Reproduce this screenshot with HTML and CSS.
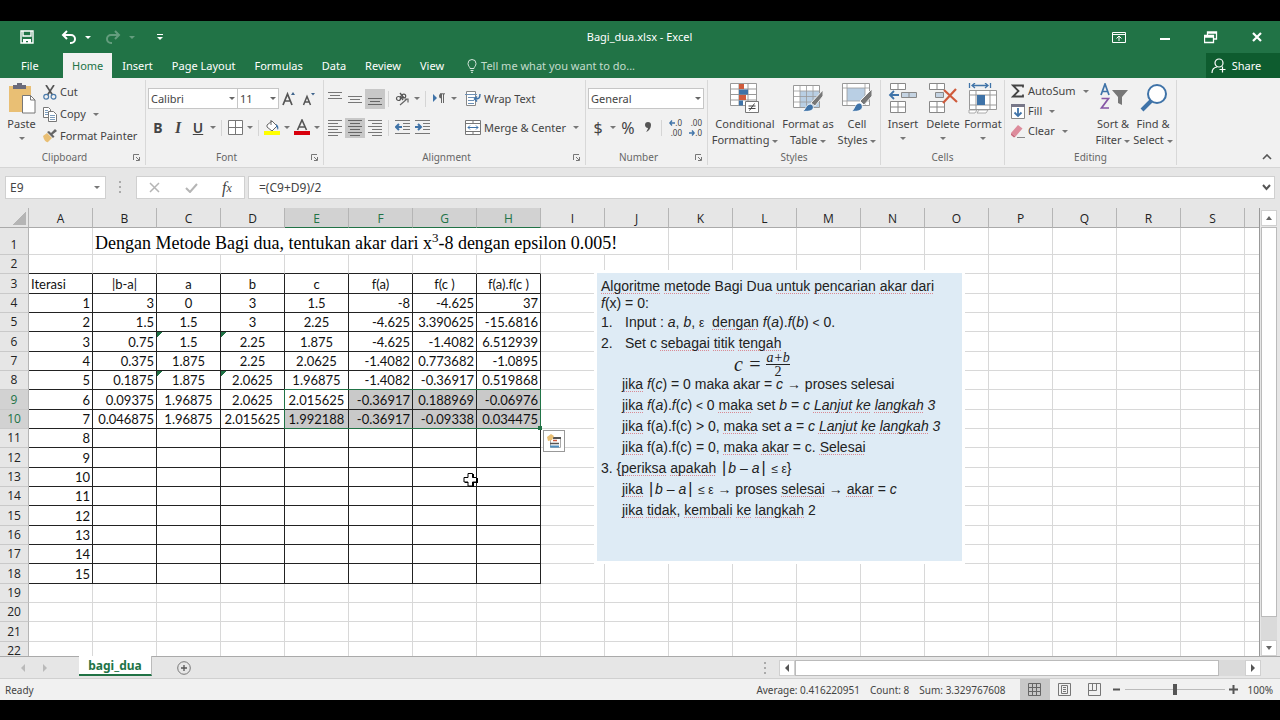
FILE: index.html
```html
<!DOCTYPE html>
<html lang="en">
<head>
    <meta charset="UTF-8">
    <title>Bagi_dua.xlsx - Excel</title>
    <link rel="stylesheet" href="styles.css">
</head>
<body>

<!-- title bar -->
<header class="titlebar">
    <div class="quick">
        <button class="q-save" aria-label="Save"><svg width="14" height="14" viewBox="0 0 14 14"><path d="M1 1h12v12H1z M3 1v5h8V1" fill="none" stroke="#fff" stroke-width="1.4"/><path d="M3 9h8v4H8v-2H6v2H3z" fill="#fff"/></svg></button>
        <button class="q-undo" aria-label="Undo"><svg width="16" height="14" viewBox="0 0 16 14"><path d="M2 5h8a4 4 0 0 1 0 8H9M6 1L2 5l4 4" fill="none" stroke="#fff" stroke-width="2"/></svg><i class="caret"></i></button>
        <button class="q-redo" aria-label="Redo"><svg width="16" height="14" viewBox="0 0 16 14"><path d="M14 5H6a4 4 0 0 0 0 8h1M10 1l4 4-4 4" fill="none" stroke="#fff" stroke-width="2"/></svg><i class="caret"></i></button>
        <button class="q-more" aria-label="Customize"><svg width="6" height="7" viewBox="0 0 6 7"><path d="M0 .5h6" stroke="#fff"/><path d="M0 3h6L3 6z" fill="#fff"/></svg></button>
    </div>
    <h1>Bagi_dua.xlsx - Excel</h1>
    <div class="win">
        <button aria-label="Ribbon display"><svg width="14" height="11" viewBox="0 0 14 11"><path d="M.5.5h13v10H.5zM.5 2.5h13M7 9V4.500M4.500 6.500L7 4l2.500 2.500" fill="none" stroke="#fff"/></svg></button>
        <button aria-label="Minimize"><svg width="12" height="12" viewBox="0 0 12 12"><path d="M1 8h10" stroke="#fff" stroke-width="2"/></svg></button>
        <button aria-label="Restore"><svg width="14" height="13" viewBox="0 0 14 13"><path d="M.5 4.500h9v7h-9zM.5 6h9M3.500 4V1h9v7H10M3.500 2h9" fill="none" stroke="#fff" stroke-width="1.300"/></svg></button>
        <button aria-label="Close"><svg width="10" height="10" viewBox="0 0 10 10"><path d="M1 1l8 8M9 1L1 9" stroke="#fff" stroke-width="2.200"/></svg></button>
    </div>
</header>

<nav class="tabs">
    <a href="#" class="file">File</a>
    <a href="#" class="current">Home</a>
    <a href="#">Insert</a>
    <a href="#">Page Layout</a>
    <a href="#">Formulas</a>
    <a href="#">Data</a>
    <a href="#">Review</a>
    <a href="#">View</a>
    <a href="#" class="tell"><svg width="10" height="14" viewBox="0 0 10 14"><path d="M3 9.500C3 8 1 7 1 4.500a4 4 0 0 1 8 0C9 7 7 8 7 9.500zM3.500 11.500h3M4 13.300h2" fill="none" stroke="#d5e6dc"/></svg>Tell me what you want to do...</a>
    <button class="share"><svg width="15" height="16" viewBox="0 0 15 16"><circle cx="8" cy="5" r="4" fill="none" stroke="#fff" stroke-width="1.200"/><path d="M1 15c0-3.500 2-5.500 5-6M11.500 8.500v6M8.500 11.500h6" fill="none" stroke="#fff" stroke-width="1.200"/></svg>Share</button>
</nav>

<!-- ribbon -->
<section class="ribbon">
    <div class="group g-clip">
        <div class="body">
            <button class="big paste">
                <svg width="28" height="31" viewBox="0 0 28 31"><path d="M1 3h22v26H1z" fill="#e9bf74"/><path d="M5 2h4V0h5v2h4v4H5z" fill="#6b6b7b"/><path d="M14.500 12.500h8l4.500 4.500v13H14.500z" fill="#fff" stroke="#777"/><path d="M22.500 12.500V17H27" fill="none" stroke="#777"/></svg>
                <span>Paste</span><i class="caret"></i>
            </button>
            <div class="stack">
                <button><svg width="14" height="15" viewBox="0 0 14 15"><path d="M3 0l6.500 10M11 0L4.500 10" stroke="#555" stroke-width="1.700"/><circle cx="3.200" cy="11.700" r="2.400" fill="none" stroke="#4b7bab" stroke-width="1.200"/><circle cx="10.500" cy="11.700" r="2.400" fill="none" stroke="#4b7bab" stroke-width="1.200"/></svg>Cut</button>
                <button><svg width="14" height="15" viewBox="0 0 14 15"><path d="M.5.5h5l2 2v8h-7z" fill="#fff" stroke="#777"/><path d="M2 3.500h3M2 5.500h4M2 7.500h4" stroke="#7c9dbd"/><path d="M5.500 4.500h5l3 3v7h-8z" fill="#fff" stroke="#777"/><path d="M7 8.500h5M7 10.500h5M7 12.500h5" stroke="#7c9dbd"/></svg>Copy <i class="caret"></i></button>
                <button><svg width="14" height="14" viewBox="0 0 14 14"><path d="M0 7l4-3 5 5-4 4c-1 1-4-1-5-6z" fill="#e9bf74"/><path d="M4 3l6 6 1.500-1.500L9.500 5.500 14 2l-2-2-4 4-2-2z" fill="#666"/></svg>Format Painter</button>
            </div>
        </div>
        <footer>Clipboard<svg class="launch" width="7" height="7" viewBox="0 0 7 7"><path d="M.5 6V.5H6M3 3l3 3M6.500 3v3.500H3" fill="none" stroke="#777"/></svg></footer>
    </div>

    <div class="group g-font">
        <div class="rows">
            <div class="line">
                <span class="combo c-font"><select aria-label="Font"><option>Calibri</option></select></span>
                <span class="combo c-size"><select aria-label="Font size"><option>11</option></select></span>
                <button class="w20" aria-label="Increase font size"><svg width="14" height="16" viewBox="0 0 14 16"><path d="M1 14L5.500 3 10 14M2.700 10h5.600" fill="none" stroke="#555" stroke-width="1.700"/><path d="M9 4l2-3 2 3z" fill="#3f648c"/></svg></button>
                <button class="w20" aria-label="Decrease font size"><svg width="14" height="16" viewBox="0 0 14 16"><path d="M1.500 14L5 5.500 8.500 14M2.700 11h4.600" fill="none" stroke="#555" stroke-width="1.500"/><path d="M9 2l2 2.500L13 2z" fill="#3f648c"/></svg></button>
            </div>
            <div class="line">
                <button class="w20 bold">B</button>
                <button class="w20 ital">I</button>
                <button class="w20 undl">U</button>
                <i class="caret"></i>
                <i class="sep"></i>
                <button class="w20" aria-label="Borders"><svg width="15" height="15" viewBox="0 0 15 15"><path d="M.5.5h14v14H.5zM7.500 1v13M1 7.500h13" fill="#fff" stroke="#777"/></svg></button>
                <i class="caret"></i>
                <i class="sep"></i>
                <button class="w20" aria-label="Fill color"><svg width="16" height="17" viewBox="0 0 16 17"><path d="M3 6l5-4 5 5-5 5-5-4z" fill="#fff" stroke="#666"/><path d="M7 1v5" stroke="#666"/><path d="M12 5c2 1 3 3 2 6-1-1-1-3-2-4z" fill="#3f73a8"/><path d="M0 12h16v4H0z" fill="#ff0"/></svg></button>
                <i class="caret"></i>
                <button class="w20" aria-label="Font color"><svg width="16" height="17" viewBox="0 0 16 17"><path d="M3.500 11L8 1l4.500 10M5 8h6" fill="none" stroke="#555" stroke-width="1.600"/><path d="M0 12h16v4H0z" fill="#d8000c"/></svg></button>
                <i class="caret"></i>
            </div>
        </div>
        <footer>Font<svg class="launch" width="7" height="7" viewBox="0 0 7 7"><path d="M.5 6V.5H6M3 3l3 3M6.500 3v3.500H3" fill="none" stroke="#777"/></svg></footer>
    </div>

    <div class="group g-align">
        <div class="body">
            <div class="rows">
                <div class="line">
                    <button class="w20" aria-label="Top align"><svg width="14" height="14" viewBox="0 0 14 14"><path d="M0 .5h14M2 3.500h10M0 6.500h14" stroke="#777"/></svg></button>
                    <button class="w20" aria-label="Middle align"><svg width="14" height="14" viewBox="0 0 14 14"><path d="M0 4.500h14M2 7.500h10M0 10.500h14" stroke="#777"/></svg></button>
                    <button class="w20 on" aria-label="Bottom align"><svg width="14" height="14" viewBox="0 0 14 14"><path d="M0 6.500h14M2 9.500h10M0 12.500h14" stroke="#666"/></svg></button>
                    <i class="sep"></i>
                    <button class="w20" aria-label="Orientation"><svg width="15" height="14" viewBox="0 0 15 14"><circle cx="3.500" cy="6.500" r="2" fill="none" stroke="#555" stroke-width="1.200"/><path d="M5 4l3 4M5 1l4 5" stroke="#555" stroke-width="1.300"/><circle cx="8.800" cy="4" r="1.900" fill="none" stroke="#555" stroke-width="1.200"/><path d="M5 13l7-6M9.500 7H13v3.500" fill="none" stroke="#666" stroke-width="1.200"/></svg></button>
                    <i class="caret"></i>
                    <i class="sep"></i>
                    <button class="w20" aria-label="Text direction"><svg width="14" height="12" viewBox="0 0 14 12"><path d="M1 1l4 4-4 4z" fill="#3f73a8"/><path d="M9.500 1v9M11.500 1v9M8 .8h5" stroke="#666"/><path d="M9.500.5v5a2.500 2.500 0 0 1 0-5z" fill="#666"/></svg></button>
                    <i class="caret"></i>
                </div>
                <div class="line">
                    <button class="w20" aria-label="Align left"><svg width="14" height="16" viewBox="0 0 14 16"><path d="M0 .5h14M0 3.500h10M0 6.500h14M0 9.500h10M0 12.500h14M0 15.500h10" stroke="#777"/></svg></button>
                    <button class="w20 on" aria-label="Center"><svg width="14" height="16" viewBox="0 0 14 16"><path d="M0 .5h14M2 3.500h10M0 6.500h14M2 9.500h10M0 12.500h14M2 15.500h10" stroke="#666"/></svg></button>
                    <button class="w20" aria-label="Align right"><svg width="14" height="16" viewBox="0 0 14 16"><path d="M0 .5h14M4 3.500h10M0 6.500h14M4 9.500h10M0 12.500h14M4 15.500h10" stroke="#777"/></svg></button>
                    <i class="sep"></i>
                    <button class="w20" aria-label="Decrease indent"><svg width="15" height="15" viewBox="0 0 15 15"><path d="M0 .5h15M8 3.500h7M8 6.500h7M8 9.500h7M0 13.500h15" stroke="#777"/><path d="M7 7H2M4 4L1 7l3 3" fill="none" stroke="#3f73a8" stroke-width="2"/></svg></button>
                    <button class="w20" aria-label="Increase indent"><svg width="15" height="15" viewBox="0 0 15 15"><path d="M0 .5h15M8 3.500h7M8 6.500h7M8 9.500h7M0 13.500h15" stroke="#777"/><path d="M0 7h5M3 4l3 3-3 3" fill="none" stroke="#3f73a8" stroke-width="2"/></svg></button>
                </div>
            </div>
            <div class="wrapcol">
                <button><svg width="16" height="15" viewBox="0 0 16 15"><path d="M1.500.5h9v14h-9z" fill="#fff" stroke="#888"/><path d="M0 3.500h12M3 6.500h7M3 9.500h6M3 12.500h6" stroke="#6d90b5"/><path d="M15 3c0 4-1 5-5 5M12 5.500L9.500 8l2.500 2.500" fill="none" stroke="#3f73a8" stroke-width="1.500"/></svg>Wrap Text</button>
                <button><svg width="16" height="15" viewBox="0 0 16 15"><path d="M.5.5h15v14H.5zM.5 3.500h15M.5 11.500h15M8 0v3M8 12v3" fill="#fff" stroke="#777"/><path d="M3 7.500h10M5 5.500l-2 2 2 2M11 5.500l2 2-2 2" fill="none" stroke="#3f73a8"/></svg>Merge &amp; Center <i class="caret"></i></button>
            </div>
        </div>
        <footer>Alignment<svg class="launch" width="7" height="7" viewBox="0 0 7 7"><path d="M.5 6V.5H6M3 3l3 3M6.500 3v3.500H3" fill="none" stroke="#777"/></svg></footer>
    </div>

    <div class="group g-num">
        <div class="rows">
            <div class="line"><span class="combo c-num"><select aria-label="Number format"><option>General</option></select></span></div>
            <div class="line">
                <button class="w20 sym">$</button>
                <i class="caret"></i>
                <button class="w20 sym">%</button>
                <button class="w20 comma" aria-label="Comma style"><svg width="6" height="10" viewBox="0 0 6 10"><path d="M0 3a3 3 0 1 1 6 0c0 3-2 6-5 7 1-1.500 2-3 2-4-2 0-3-1.500-3-3z" fill="#555"/></svg></button>
                <i class="sep"></i>
                <button class="w20 dec"><span><svg width="6" height="6" viewBox="0 0 6 6"><path d="M6 3H1M3 .5L.8 3 3 5.500" fill="none" stroke="#3f73a8" stroke-width="1.300"/></svg>.0</span><span>.00</span></button>
                <button class="w20 dec"><span>.00</span><span><svg width="6" height="6" viewBox="0 0 6 6"><path d="M0 3h5M3 .5L5.200 3 3 5.500" fill="none" stroke="#3f73a8" stroke-width="1.300"/></svg>.0</span></button>
            </div>
        </div>
        <footer>Number<svg class="launch" width="7" height="7" viewBox="0 0 7 7"><path d="M.5 6V.5H6M3 3l3 3M6.500 3v3.500H3" fill="none" stroke="#777"/></svg></footer>
    </div>

    <div class="group g-style">
        <div class="body">
            <button class="big w70"><svg width="30" height="31" viewBox="0 0 30 31"><path d="M.5.5h26v22H.5zM.5 6h26M.5 11.500h26M.5 17h26M9 0v23M18 0v23" fill="#fff" stroke="#999"/><path d="M9 1h5v5H9zM9 12h7v5H9z" fill="#cf5b3c"/><path d="M9 6.500h9v5H9zM9 17.500h4v5H9z" fill="#3f73a8"/><path d="M15.500 18.500h13v11h-13z" fill="#fff" stroke="#777"/><path d="M18.500 23h7M18.500 25.500h7M24.500 20.500l-5 7" stroke="#444"/></svg><span>Conditional<br>Formatting <i class="caret"></i></span></button>
            <button class="big w56"><svg width="30" height="31" viewBox="0 0 30 31"><path d="M.5 2.500h26v22H.5z" fill="#fff" stroke="#999"/><path d="M7 8h19v16H7z" fill="#b9cfe4"/><path d="M.5 8h26M.5 13.500h26M.5 19h26M7 2v22M13.500 2v22M20 2v22" stroke="#999" stroke-width=".800"/><path d="M30 7L18 20l4 3 8-10z" fill="#777" stroke="#f1f1f1"/><path d="M9 28c4 0 3-7 9-7 4 2 4 9-9 7z" fill="#3f73a8" stroke="#fff" stroke-width=".800"/></svg><span>Format as<br>Table <i class="caret"></i></span></button>
            <button class="big w42"><svg width="30" height="31" viewBox="0 0 30 31"><path d="M.5.5h27v22H.5z" fill="#fff" stroke="#999"/><path d="M5 5h18v13H5z" fill="#b9cfe4"/><path d="M.5 5h27M.5 18h27M5 0v23M23 0v23" stroke="#999" stroke-width=".800"/><path d="M30 6L18 18l4 4 8-9z" fill="#777" stroke="#f1f1f1"/><path d="M9 28c4 0 3-8 9-8 4 2 4 10-9 8z" fill="#3f73a8" stroke="#fff" stroke-width=".800"/></svg><span>Cell<br>Styles <i class="caret"></i></span></button>
        </div>
        <footer>Styles</footer>
    </div>

    <div class="group g-cells">
        <div class="body">
            <button class="big w40"><svg width="30" height="31" viewBox="0 0 30 31"><path d="M2.500.5h15v6h-15zM10 .5v6M2.500 18.500h15v11h-15zM2.500 24h15M10 18v11" fill="#fff" stroke="#888"/><path d="M13.500 9.500h15v5h-15zM21 9.500v5" fill="#c4d3e2" stroke="#888"/><path d="M11 12H2M6 8l-4 4 4 4" fill="none" stroke="#3f73a8" stroke-width="1.800"/></svg><span>Insert</span><i class="caret"></i></button>
            <button class="big w40"><svg width="30" height="31" viewBox="0 0 30 31"><path d="M1.500.5h15v6h-15zM9 .5v6M1.500 18.500h15v11h-15zM1.500 24h15M9 18v11" fill="#fff" stroke="#888"/><path d="M7.500 9.500h8v5h-8z" fill="#c4d3e2" stroke="#888"/><path d="M16 7l13 12M28 6L15 20" stroke="#cf5b3c" stroke-width="2.200"/></svg><span>Delete</span><i class="caret"></i></button>
            <button class="big w40"><svg width="30" height="31" viewBox="0 0 30 31"><path d="M1.500 7.500h27v19h-27zM1.500 12h27M1.500 22h27M8 7v19M22 7v19" fill="#fff" stroke="#999"/><path d="M1 27h8l-2 3H1zM11 27h9l-2 3h-9z" fill="#fff" stroke="#999" stroke-width=".800"/><path d="M9 12h8v10H9z" fill="#3f73a8"/><path d="M1.500 0v5M22.500 0v5M4 2.500h16M7 0L4 2.500 7 5M17 0l3 2.500L17 5" fill="none" stroke="#3f73a8" stroke-width="1.300"/></svg><span>Format</span><i class="caret"></i></button>
        </div>
        <footer>Cells</footer>
    </div>

    <div class="group g-edit">
        <div class="body">
            <div class="stack">
                <button><svg width="14" height="14" viewBox="0 0 14 14"><path d="M12 3.500V1.500H2L7.500 7 2 12.500h10v-2" fill="none" stroke="#444" stroke-width="1.800"/></svg>AutoSum <i class="caret"></i></button>
                <button><svg width="14" height="15" viewBox="0 0 14 15"><path d="M.5.5h13v14H.5z" fill="#fff" stroke="#888"/><path d="M0 0h14v3H0z" fill="#778"/><path d="M7 4v8M3.500 8.500L7 12l3.500-3.500" fill="none" stroke="#3f73a8" stroke-width="1.800"/></svg>Fill <i class="caret"></i></button>
                <button><svg width="14" height="13" viewBox="0 0 14 13"><path d="M0 8l7-8 4.500 3.500-7 8z" fill="#dd8c9c"/><path d="M0 8l4.500 3.500L3 12.500 0 10z" fill="#c9687c"/><path d="M6 12.500h8" stroke="#888"/></svg>Clear <i class="caret"></i></button>
            </div>
            <button class="big w40"><svg width="30" height="31" viewBox="0 0 30 31"><path d="M3 12L7 1l4 11M4.500 8.500h5" fill="none" stroke="#3f73a8" stroke-width="1.700"/><path d="M3.500 15.500h7l-7 9.500h7.500" fill="none" stroke="#8656a5" stroke-width="1.700"/><path d="M14 7h16l-6 7v8l-4-2v-6z" fill="#777"/></svg><span>Sort &amp;<br>Filter <i class="caret"></i></span></button>
            <button class="big w40"><svg width="30" height="31" viewBox="0 0 30 31"><circle cx="19" cy="11" r="9" fill="#fff" stroke="#3f73a8" stroke-width="2"/><path d="M13 18L4 27" stroke="#3f73a8" stroke-width="4"/></svg><span>Find &amp;<br>Select <i class="caret"></i></span></button>
        </div>
        <footer>Editing</footer>
    </div>
    <button class="collapse" aria-label="Collapse ribbon"><svg width="10" height="6" viewBox="0 0 10 6"><path d="M1 5l4-4 4 4" fill="none" stroke="#555" stroke-width="1.600"/></svg></button>
</section>

<!-- formula bar -->
<section class="formula">
    <div class="namebox"><input type="text" value="E9" aria-label="Name box"><i class="caret"></i></div>
    <i class="dots"></i>
    <div class="fx">
        <button aria-label="Cancel"><svg width="11" height="11" viewBox="0 0 11 11"><path d="M1 1l9 9M10 1l-9 9" stroke="#b5b5b5" stroke-width="1.500"/></svg></button>
        <button aria-label="Enter"><svg width="13" height="10" viewBox="0 0 13 10"><path d="M1 5l4 4 7-8" fill="none" stroke="#b5b5b5" stroke-width="2"/></svg></button>
        <button class="fn">f<sub>x</sub></button>
    </div>
    <div class="fxinput"><input type="text" value="=(C9+D9)/2" aria-label="Formula"><svg width="9" height="7" viewBox="0 0 9 7"><path d="M1 1l3.500 4L8 1" fill="none" stroke="#555" stroke-width="2"/></svg></div>
</section>

<!-- worksheet -->
<main class="work">
    <div class="sheet">
        <table id="grid">
            <thead></thead>
            <tbody></tbody>
        </table>
        <div class="selection"></div>
        <button class="analysis" aria-label="Quick analysis"><svg width="15" height="15" viewBox="0 0 15 15"><path d="M3.500 3.500h10v10h-10z" fill="#fff" stroke="#aaa"/><path d="M6 3h8v2H6z" fill="#555"/><path d="M3 9.500h9" stroke="#555" stroke-width="1.500"/><path d="M3 12.500h9" stroke="#4f8fc0" stroke-width="2"/><path d="M6 6.500h4" stroke="#cf5b3c" stroke-width="1.500"/><path d="M0 3l4-3 3 2-2 4-4 1z" fill="#e9bf74"/></svg></button>

        <article class="note">
            <p class="lead"><u>Algoritme</u> <u>metode</u> Bagi Dua <u>untuk</u> <u>pencarian</u> <u>akar</u> <u>dari</u><br><em>f</em>(x) = 0:</p>
            <ol>
                <li><span class="no">1.</span>Input : <em>a</em>, <em>b</em>, <small>ε</small>&nbsp; <u>dengan</u> <em>f</em>(<em>a</em>).<em>f</em>(<em>b</em>) <small>&lt;</small> 0.</li>
                <li><span class="no">2.</span>Set c <u>sebagai</u> <u>titik</u> <u>tengah</u></li>
            </ol>
            <div class="eq"><span>c =</span><span class="frac"><span>a+b</span><span>2</span></span></div>
            <p><u>jika</u> <em>f</em>(<em>c</em>) = 0 maka akar = <em>c</em> → proses selesai</p>
            <p><u>jika</u> <em>f</em>(<em>a</em>).<em>f</em>(<em>c</em>) <small>&lt;</small> 0 <u>maka</u> set <em>b</em> = <em>c <u>Lanjut</u> <u>ke</u> <u>langkah</u> 3</em></p>
            <p><u>jika</u> f(a).f(c) &gt; 0, <u>maka</u> set <em>a</em> = <em>c <u>Lanjut</u> <u>ke</u> <u>langkah</u> 3</em></p>
            <p><u>jika</u> f(a).f(c) = 0, <u>maka</u> <u>akar</u> = c. <u>Selesai</u></p>
            <p class="out">3. {<u>periksa</u> <u>apakah</u> <b>|</b><em>b</em> – <em>a</em><b>|</b> <small>≤ ε</small>}</p>
            <p><u>jika</u> <b>|</b><em>b</em> – <em>a</em><b>|</b> <small>≤ ε</small> → proses <u>selesai</u> → <u>akar</u> = <em>c</em></p>
            <p><u>jika</u> <u>tidak</u>, <u>kembali</u> <u>ke</u> <u>langkah</u> 2</p>
        </article>

        <svg class="cursor" width="16" height="16" viewBox="0 0 16 16"><path d="M6 2h5v4h4v5h-4v4H6v-4H2V6h4z" fill="#000"/><path d="M5 1.500h4.500V5.500h4v4.500h-4v4H5v-4H1V5.500h4z" fill="#fff" stroke="#000"/></svg>
    </div>
    <div class="vscroll">
        <button aria-label="Scroll up"><i class="caret up"></i></button>
        <div class="thumb"></div>
        <div class="track"></div>
        <button aria-label="Scroll down"><i class="caret down"></i></button>
    </div>
</main>

<div class="sheetbar">
    <button class="nav" aria-label="Previous sheet"><i class="caret left"></i></button>
    <button class="nav" aria-label="Next sheet"><i class="caret right"></i></button>
    <a href="#" class="sheettab">bagi_dua</a>
    <button class="add" aria-label="New sheet"><svg width="14" height="14" viewBox="0 0 14 14"><path d="M7 4v6M4 7h6" stroke="#555" stroke-width="1.300"/><circle cx="7" cy="7" r="6.300" fill="none" stroke="#777"/></svg></button>
    <i class="dots"></i>
    <div class="hscroll">
        <button aria-label="Scroll left"><i class="caret left"></i></button>
        <div class="thumb"></div>
        <div class="track"></div>
        <button aria-label="Scroll right"><i class="caret right"></i></button>
    </div>
</div>

<footer class="status">
    <span class="ready">Ready</span>
    <span>Average: 0.416220951</span>
    <span>Count: 8</span>
    <span>Sum: 3.329767608</span>
    <div class="views">
        <button class="on" aria-label="Normal"><svg width="13" height="13" viewBox="0 0 13 13"><path d="M.5.500h12v12H.5zM.5 4.500h12M.5 8.500h12M4.500.500v12M8.500.500v12" fill="none" stroke="#666"/></svg></button>
        <button aria-label="Page layout"><svg width="13" height="13" viewBox="0 0 13 13"><path d="M.5.500h12v12H.5zM3.500 2.500h6v8h-6zM5 4.500h3M5 6.500h3M5 8.500h3" fill="none" stroke="#777"/></svg></button>
        <button aria-label="Page break"><svg width="13" height="13" viewBox="0 0 13 13"><path d="M.5.500h12v12H.5zM.5 7.500h8V.5M4.500.500v7" fill="none" stroke="#777"/></svg></button>
    </div>
    <div class="zoombar">
        <button aria-label="Zoom out"><svg width="9" height="9" viewBox="0 0 9 9"><path d="M1 4.500h7" stroke="#555" stroke-width="2"/></svg></button>
        <input class="zoom" type="range" min="0" max="100" value="50" aria-label="Zoom">
        <button aria-label="Zoom in"><svg width="9" height="9" viewBox="0 0 9 9"><path d="M0 4.500h9M4.500 0v9" stroke="#555" stroke-width="2"/></svg></button>
    </div>
    <span>100%</span>
</footer>

<script src="script.js"></script>
</body>
</html>
```
FILE: styles.css
```css
* {
    padding: 0;
    margin: 0;
    box-sizing: border-box;
}
body {
    display: flex;
    flex-direction: column;
    height: 100vh;
    padding: 21px 0 20px;
    background-color: #000;
    color: #444;
    font: 11px/16px "Noto Sans", "Open Sans", sans-serif;
    overflow: hidden;
}
button, input, select {
    font: inherit;
    color: inherit;
    border: 0;
    background: none;
}
button {
    display: flex;
    align-items: center;
    justify-content: center;
    white-space: nowrap;
}
a {
    color: inherit;
    text-decoration: none;
}
svg {
    display: block;
    flex: none;
}
.caret {
    display: inline-block;
    flex: none;
    border: 3px solid transparent;
    border-top-color: #777;
    border-bottom: 0;
    vertical-align: middle;
}
.caret.up {
    border-top: 0;
    border-bottom: 4px solid #666;
}
.caret.down {
    border-top: 4px solid #666;
}
.caret.left {
    border: 4px solid transparent;
    border-left: 0;
    border-right-color: #555;
}
.caret.right {
    border: 4px solid transparent;
    border-right: 0;
    border-left-color: #555;
}

/* title bar */
.titlebar {
    display: flex;
    align-items: center;
    height: 32px;
    flex: none;
    background-color: #217346;
    color: #fff;
}
.titlebar h1 {
    margin-right: 20px;
    font-size: 11px;
    font-weight: normal;
}
.quick, .win {
    display: flex;
    flex: 1;
    align-items: center;
}
.quick {
    padding-left: 19px;
    gap: 16px;
}
.quick button {
    gap: 8px;
    height: 20px;
}
.quick .caret {
    border-top-color: #fff;
}
.q-save {
    width: 15px;
}
.q-undo {
    margin-left: 11px;
}
.q-redo {
    margin-left: -2px;
    opacity: .3;
}
.q-more {
    margin-left: 6px;
}
.win {
    justify-content: flex-end;
}
.win button {
    width: 46px;
    height: 32px;
}

/* ribbon tabs */
.tabs {
    display: flex;
    gap: 1px;
    height: 25px;
    flex: none;
    background-color: #217346;
    color: #fff;
    line-height: 25px;
}
.tabs a {
    padding: 0 9px;
    white-space: nowrap;
}
.tabs .file {
    width: 62px;
    padding-left: 21px;
}
.tabs .current {
    background-color: #f1f1f1;
    color: #217346;
}
.tabs .tell {
    display: flex;
    align-items: center;
    gap: 4px;
    margin-left: 4px;
    color: #c3dccd;
}
.share {
    gap: 6px;
    width: 74px;
    margin-left: auto;
    padding-right: 14px;
    background-color: #0e5c2f;
}

/* ribbon */
.ribbon {
    display: flex;
    height: 90px;
    flex: none;
    padding-top: 2px;
    background-color: #f1f1f1;
    border-bottom: 1px solid #d5d5d5;
}
.group {
    display: flex;
    flex-direction: column;
    flex: none;
    margin-bottom: 2px;
    border-right: 1px solid #d8d8d8;
}
.group footer {
    position: relative;
    margin-top: auto;
    padding-right: 16px;
    font-size: 10px;
    line-height: 16px;
    text-align: center;
    color: #666;
}
.launch {
    position: absolute;
    right: 5px;
    bottom: 4px;
}
.g-clip {
    width: 146px;
}
.g-font {
    width: 178px;
}
.g-align {
    width: 262px;
}
.g-num {
    width: 122px;
}
.g-style {
    width: 173px;
}
.g-cells {
    width: 124px;
}
.g-edit {
    width: 172px;
}
.group.g-style footer, .group.g-cells footer, .group.g-edit footer {
    padding-right: 0;
}
.body {
    display: flex;
}
.g-style .body, .g-cells .body {
    padding-left: 2px;
}
.big {
    flex-direction: column;
    justify-content: flex-start;
    flex: none;
    padding-top: 3px;
    text-align: center;
}
.big svg {
    margin-bottom: 2px;
}
.big > .caret {
    margin-top: 5px;
}
.paste {
    width: 43px;
}
.w70 {
    width: 70px;
}
.w56 {
    width: 56px;
}
.w42 {
    width: 42px;
}
.w40 {
    width: 40px;
}
.stack {
    padding-top: 1px;
}
.stack button {
    gap: 3px;
    height: 22px;
}
.g-edit .stack {
    width: 88px;
    padding-left: 6px;
}
.g-edit .stack button {
    height: 20px;
}
.stack .caret, .wrapcol .caret {
    margin-left: 4px;
}
.rows {
    display: flex;
    flex-direction: column;
    gap: 8px;
    padding: 8px 0 0 2px;
}
.line {
    display: flex;
    align-items: center;
    height: 21px;
}
.w20 {
    width: 20px;
    height: 20px;
    flex: none;
}
.on {
    background-color: #c8c8c8;
}
.combo {
    position: relative;
    display: flex;
    height: 21px;
    background-color: #fff;
    border: 1px solid #c6c6c6;
}
.combo::after {
    content: "";
    position: absolute;
    right: 2px;
    top: 8px;
    border: 3px solid transparent;
    border-top-color: #666;
    border-bottom: 0;
}
.combo select {
    width: 100%;
    padding-left: 2px;
    appearance: none;
}
.c-font {
    width: 90px;
}
.c-size {
    width: 41px;
    border-left: 0;
}
.c-num {
    width: 116px;
}
.sep {
    width: 1px;
    height: 16px;
    margin: 0 3px;
    background-color: #d5d5d5;
}
.line .caret {
    margin: 0 2px;
}
.bold {
    font-weight: bold;
    font-size: 14px;
}
.ital {
    font: italic bold 16px "Liberation Serif", serif;
}
.undl {
    font-size: 14px;
    font-weight: 600;
    text-decoration: underline;
}
.sym {
    font-size: 16px;
}
.comma {
    padding-bottom: 2px;
}
.dec {
    flex-direction: column;
    align-items: flex-end;
    padding-right: 3px;
    font-size: 8px;
    line-height: 10px;
}
.dec span {
    display: flex;
    align-items: center;
}
.g-align .body .rows {
    width: 141px;
    padding-left: 1px;
}
.wrapcol {
    display: flex;
    flex-direction: column;
    align-items: flex-start;
    gap: 8px;
    padding-top: 8px;
}
.wrapcol button {
    gap: 3px;
    height: 21px;
}
.collapse {
    align-self: flex-end;
    margin: 0 8px 7px auto;
}

/* formula bar */
.formula {
    display: flex;
    flex: none;
    height: 40px;
    padding: 8px 5px 9px;
    background-color: #e6e6e6;
}
.namebox, .fx, .fxinput {
    display: flex;
    align-items: center;
    background-color: #fff;
    border: 1px solid #d0d0d0;
}
.namebox {
    width: 101px;
    padding: 0 5px 0 4px;
}
.namebox input {
    flex: 1;
    min-width: 0;
    font-size: 12px;
}
.fxinput input {
    flex: 1;
    font-size: 12px;
}
.dots {
    width: 2px;
    height: 12px;
    background: repeating-linear-gradient(#aaa 0 2px, transparent 2px 5px);
}
.formula .dots {
    margin: 5px 15px 0 13px;
}
.fx {
    width: 109px;
    justify-content: space-around;
}
.fn {
    font: italic 16px/18px "Liberation Serif", serif;
}
.fn sub {
    font-size: 12px;
}
.fxinput {
    flex: 1;
    margin-left: 3px;
    padding: 0 3px 0 10px;
}

/* worksheet */
.work {
    display: flex;
    flex: 1;
    min-height: 0;
    background-color: #e6e6e6;
}
.sheet {
    position: relative;
    flex: 1;
    overflow: hidden;
    border-right: 1px solid #999;
    background-color: #fff;
}
#grid {
    width: 1309px;
    table-layout: fixed;
    border-collapse: separate;
    border-spacing: 0;
    color: #111;
    font: 13px/18px Lato, "Open Sans", sans-serif;
}
#grid th {
    font-family: "Open Sans", "Noto Sans", sans-serif;
    font-weight: normal;
    font-size: 12px;
    background-color: #e6e6e6;
    border-right: 1px solid #b5b5b5;
    border-bottom: 1px solid #c9c9c9;
    color: #222;
}
#grid thead th {
    height: 20px;
    padding-top: 3px;
    line-height: 16px;
    border-bottom-color: #aaa;
}
#grid .corner {
    width: 29px;
    background-image: linear-gradient(135deg, transparent 50%, #b5b5b5 50%);
    background-repeat: no-repeat;
    background-size: 14px 14px;
    background-position: 12px 3px;
}
#grid thead .col {
    width: 64px;
}
#grid th.hit {
    background-color: #d2d2d2;
    color: #217346;
}
#grid thead th.hit {
    border-bottom: 1px solid #217346;
}
#grid td {
    height: 19px;
    padding: 0 2px;
    border-right: 1px solid #d8d8d8;
    border-bottom: 1px solid #d8d8d8;
    text-align: right;
    white-space: nowrap;
}
#grid tr:nth-child(3n) td {
    height: 20px;
}
#grid tr:first-child td {
    height: 27px;
}
#grid tbody tr:first-child th {
    vertical-align: bottom;
}
#grid td.heading {
    padding-top: 3px;
    text-align: left;
    color: #000;
    font: 18px/20px "Liberation Serif", serif;
}
.heading sup {
    font-size: 13px;
    line-height: 1px;
}
#grid td.box {
    border-right-color: #222;
    border-bottom-color: #222;
}
#grid td.edge {
    border-bottom-color: #222;
}
#grid td.mid {
    text-align: center;
}
#grid td.left {
    text-align: left;
}
#grid td.sel {
    background-color: #c9c9c9;
}
#grid td.warn {
    background-image: linear-gradient(135deg, #1e7145 4px, transparent 4px);
}
.selection {
    position: absolute;
    left: 284px;
    top: 181px;
    width: 257px;
    height: 40px;
    border: 1px solid #217346;
}
.selection::after {
    content: "";
    position: absolute;
    right: -2px;
    bottom: -2px;
    width: 4px;
    height: 4px;
    background-color: #217346;
}
.analysis {
    position: absolute;
    left: 543px;
    top: 222px;
    width: 22px;
    height: 22px;
    background-color: #fff;
    border: 1px solid #999;
}
.cursor {
    position: absolute;
    left: 463px;
    top: 264px;
}

/* text box over the cells */
.note {
    position: absolute;
    left: 597px;
    top: 65px;
    width: 365px;
    height: 288px;
    padding: 5px 4px 0;
    background-color: #deebf5;
    box-shadow: 0 0 0 3px #fff;
    color: #222;
    font: 14px/21px "Liberation Sans", sans-serif;
    white-space: nowrap;
}
.note ol {
    list-style: none;
}
.note p {
    padding-left: 21px;
}
.note .lead {
    padding-left: 0;
    line-height: 17px;
}
.note .out {
    padding-left: 0;
}
.note u {
    text-decoration: underline dotted #d98a94 1px;
    text-decoration-skip-ink: none;
    text-underline-offset: 2px;
}
.note small {
    font-size: 12px;
    line-height: 1px;
}
.note b {
    margin: 0 2px;
    font-weight: normal;
    font-size: 16px;
    line-height: 1px;
}
.no {
    display: inline-block;
    width: 24px;
}
.eq {
    display: flex;
    align-items: center;
    gap: 5px;
    height: 20px;
    padding-left: 133px;
    font: italic 20px/20px "Liberation Serif", serif;
}
.frac {
    font-size: 14px;
    line-height: 13px;
    text-align: center;
}
.frac span {
    display: block;
}
.frac span + span {
    border-top: 1px solid #222;
    font-style: normal;
}

/* scroll bars */
.vscroll {
    display: flex;
    flex-direction: column;
    width: 20px;
    padding: 2px 3px 0 1px;
}
.vscroll button, .hscroll button {
    width: 16px;
    height: 16px;
    background-color: #fff;
    border: 1px solid #d0d0d0;
}
.thumb {
    background-color: #fff;
    border: 1px solid #bbb;
}
.track {
    background-color: #dadada;
}
.vscroll .thumb {
    flex: 17;
    margin-top: 1px;
}
.vscroll .track {
    flex: 1;
}

/* sheet tabs */
.sheetbar {
    display: flex;
    align-items: center;
    flex: none;
    height: 23px;
    background-color: #e6e6e6;
    border-top: 1px solid #aaa;
    border-bottom: 1px solid #d0d0d0;
}
.nav {
    width: 22px;
    opacity: .3;
}
.nav:first-child {
    margin-left: 12px;
}
.sheettab {
    align-self: flex-start;
    width: 73px;
    height: 20px;
    margin: -1px 25px 0 23px;
    background-color: #fff;
    border-right: 1px solid #bbb;
    border-bottom: 2px solid #217346;
    color: #217346;
    font-size: 12px;
    font-weight: bold;
    line-height: 19px;
    text-align: center;
}
.sheetbar .dots {
    margin: 0 13px 0 auto;
}
.hscroll {
    display: flex;
    width: 482px;
    margin-right: 19px;
}
.hscroll .thumb {
    flex: 16;
}
.hscroll .track {
    flex: 1;
}

/* status bar */
.status {
    display: flex;
    align-items: center;
    flex: none;
    height: 21px;
    gap: 10px;
    padding: 0 7px 0 5px;
    background-color: #f1f1f1;
    font-size: 10px;
}
.ready {
    margin-right: auto;
}
.views {
    display: flex;
    margin-left: 4px;
}
.views button {
    width: 30px;
    height: 21px;
}
.zoombar {
    display: flex;
    align-items: center;
    gap: 4px;
    margin-left: -8px;
}
.zoom {
    width: 100px;
    height: 12px;
    appearance: none;
    background: linear-gradient(#bbb, #bbb) center / 100% 1px no-repeat;
}
.zoom::-webkit-slider-thumb {
    appearance: none;
    width: 4px;
    height: 11px;
    background-color: #555;
}
```
FILE: script.js
```js
/*column letters and the contents of A3:H18*/
var letters = 'ABCDEFGHIJKLMNOPQRS'.split('');
letters.push('');//last column is only partly on the sheet
var title = 'Dengan Metode Bagi dua, tentukan akar dari x<sup>3</sup>-8 dengan epsilon 0.005!';
var data = {
    3: ['Iterasi', '|b-a|', 'a', 'b', 'c', 'f(a)', 'f(c )', 'f(a).f(c )'],
    4: ['1', '3', '0', '3', '1.5', '-8', '-4.625', '37'],
    5: ['2', '1.5', '1.5', '3', '2.25', '-4.625', '3.390625', '-15.6816'],
    6: ['3', '0.75', '1.5', '2.25', '1.875', '-4.625', '-1.4082', '6.512939'],
    7: ['4', '0.375', '1.875', '2.25', '2.0625', '-1.4082', '0.773682', '-1.0895'],
    8: ['5', '0.1875', '1.875', '2.0625', '1.96875', '-1.4082', '-0.36917', '0.519868'],
    9: ['6', '0.09375', '1.96875', '2.0625', '2.015625', '-0.36917', '0.188969', '-0.06976'],
    10: ['7', '0.046875', '1.96875', '2.015625', '1.992188', '-0.36917', '-0.09338', '0.034475']
};
var warn = ['C6', 'D6', 'C8', 'D8'];

//head row
var head = '<tr><th class="corner"></th>';
for (var i = 0; i < letters.length; i++) {
    head += '<th class="col' + (i >= 4 && i <= 7 ? ' hit' : '') + '">' + letters[i] + '</th>';
}
document.querySelector('#grid thead').innerHTML = head + '</tr>';

//body rows
var html = '';
for (var r = 1; r <= 22; r++) {
    html += '<tr><th' + (r === 9 || r === 10 ? ' class="hit"' : '') + '>' + r + '</th>';
    for (var c = 0; c < letters.length; c++) {
        if (r === 1 && c === 1) {
            html += '<td class="heading" colspan="9">' + title + '</td>';
            c = 9;
            continue;
        }
        var cls = [];
        var text = data[r] ? data[r][c] || '' : '';
        if (r > 10 && r < 19 && c === 0) text = r - 3;
        if (r >= 3 && r <= 18 && c < 8) cls.push('box');
        if (r === 2 && c < 8) cls.push('edge');
        if (r === 3 || (c >= 2 && c <= 4)) cls.push(r === 3 && c === 0 ? 'left' : 'mid');
        if ((r === 9 || r === 10) && c >= 4 && c <= 7 && !(r === 9 && c === 4)) cls.push('sel');
        if (warn.indexOf(letters[c] + r) > -1) cls.push('warn');
        html += '<td class="' + cls.join(' ') + '">' + text + '</td>';
    }
    html += '</tr>';
}
document.querySelector('#grid tbody').innerHTML = html;
```
